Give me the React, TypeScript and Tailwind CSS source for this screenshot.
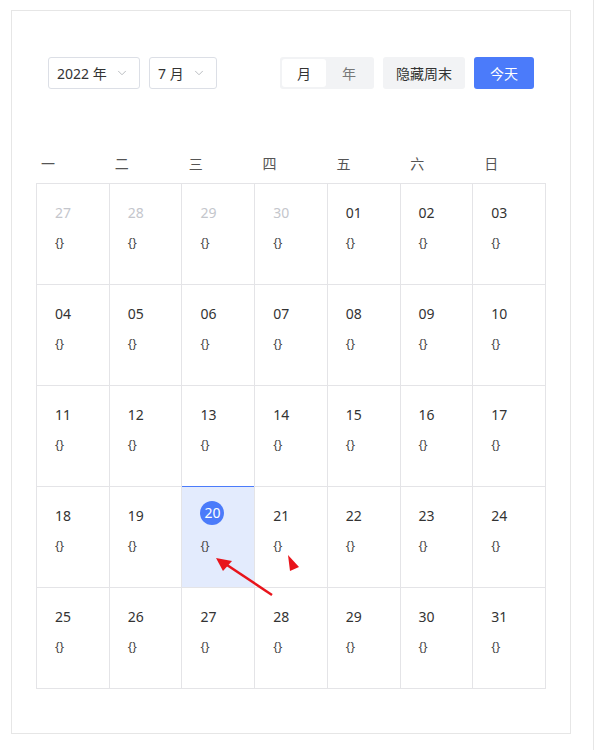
import { ChevronDown } from "lucide-react";

const WEEK = ["一", "二", "三", "四", "五", "六", "日"];

type Day = { label: string; muted?: boolean; today?: boolean };

const days: Day[] = [
  ...["27", "28", "29", "30"].map((label) => ({ label, muted: true })),
  ...Array.from({ length: 31 }, (_, i) => ({
    label: String(i + 1).padStart(2, "0"),
    today: i + 1 === 20,
  })),
];

function Select(props: { value: string; width: string }) {
  return (
    <div
      className={`${props.width} h-8 flex items-center justify-between pl-2 pr-[10px] border border-[#dcdfe6] rounded-[3px] text-[14px] text-[#333]`}
    >
      <span>{props.value}</span>
      <ChevronDown size={14} strokeWidth={1.5} className="text-[#b0b3b8]" />
    </div>
  );
}

function Cell({ day }: { day: Day }) {
  return (
    <div className={`relative h-[101px] border-r border-b border-[#e4e4e7] ${day.today ? "bg-[#e3ebfd]" : ""}`}>
      {day.today && <div className="absolute left-0 right-0 -top-px h-px bg-[#4b7bfa]" />}
      <div className="pt-4 pl-[18px]">
        {day.today ? (
          <span className="relative -top-[3px] inline-flex w-6 h-6 items-center justify-center rounded-full bg-[#4b7bfa] text-white text-[14px]">
            {day.label}
          </span>
        ) : (
          <span className={`inline-flex h-6 items-center text-[14px] ${day.muted ? "text-[#c4c6cc]" : "text-[#333]"}`}>
            {day.label}
          </span>
        )}
      </div>
      <div className="pl-[18px] mt-2 h-5 leading-5 text-[12px] text-[#444]">{"{}"}</div>
    </div>
  );
}

export default function App() {
  return (
    <div className="relative flex w-[604px] h-[750px] bg-white overflow-hidden font-['Noto_Sans','Noto_Sans_CJK_SC',sans-serif]">
      <div className="ml-[11px] mt-[10px] w-[560px] h-[724px] border border-[#e6e6e6] px-6 pt-[46px]">
        <div className="flex items-center justify-between px-3">
          <div className="flex gap-[9px]">
            <Select value="2022 年" width="w-[92px]" />
            <Select value="7 月" width="w-[68px]" />
          </div>
          <div className="flex gap-[9px] text-[14px]">
            <div className="flex h-8 w-[94px] p-[2px] rounded-[3px] bg-[#f2f3f5]">
              <div className="w-[44px] flex items-center justify-center bg-white rounded-[3px] text-[#333]">月</div>
              <div className="flex-1 flex items-center justify-center text-[#777]">年</div>
            </div>
            <div className="h-8 w-[82px] flex items-center justify-center rounded-[3px] bg-[#f2f3f5] text-[#333]">
              隐藏周末
            </div>
            <div className="h-8 w-[60px] flex items-center justify-center rounded-[3px] bg-[#4b7bfa] text-white">
              今天
            </div>
          </div>
        </div>

        <div className="mt-[64px] w-[522px] grid grid-cols-7 pl-[5px] h-[30px] text-[14px] text-[#555]">
          {WEEK.map((w) => (
            <div key={w}>{w}</div>
          ))}
        </div>

        <div className="grid grid-cols-7 border-l border-t border-[#e4e4e7]">
          {days.map((d, i) => (
            <Cell key={i} day={d} />
          ))}
        </div>
      </div>
      <div className="ml-[22px] w-px h-full bg-[#e6e6e6]" />

      <svg className="absolute left-0 top-0 pointer-events-none" width="604" height="750">
        <line x1="272" y1="595" x2="224" y2="563" stroke="#e8141b" strokeWidth="2.5" />
        <polygon points="216,558 232,561 223,571" fill="#e8141b" />
        <polygon points="288,555 299,567 290,571" fill="#e8141b" />
      </svg>
    </div>
  );
}
